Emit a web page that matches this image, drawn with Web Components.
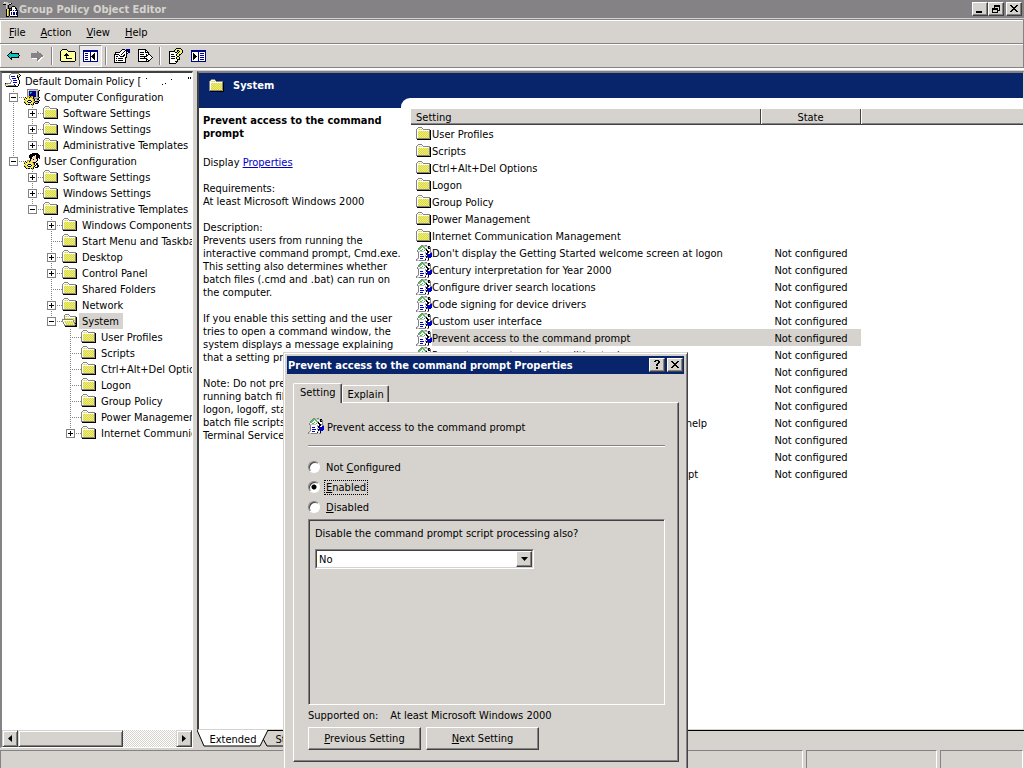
<!doctype html>
<html lang="en">
<head>
  <meta charset="utf-8">
  <title>Group Policy Object Editor</title>
  <style>
    html, body { height: 100%; margin: 0; }
    body {
      --face: #d6d3ce; --shade: #848284; --dark: #424142; --navy: #08246b;
      background: var(--face); color: #000; overflow: hidden;
      font: 11px/13px "DejaVu Sans Condensed", "DejaVu Sans", Tahoma, sans-serif;
    }
  </style>
</head>
<body>
  <policy-editor>
    <tree-item slot="tree" icon="scroll" root>Default Domain Policy [ <pixel-icon name="specks"></pixel-icon>
      <tree-item slot="kids" state="minus" icon="computer">Computer Configuration
        <tree-item slot="kids" state="plus">Software Settings</tree-item>
        <tree-item slot="kids" state="plus">Windows Settings</tree-item>
        <tree-item slot="kids" state="plus" last>Administrative Templates</tree-item>
      </tree-item>
      <tree-item slot="kids" state="minus" icon="user" last>User Configuration
        <tree-item slot="kids" state="plus">Software Settings</tree-item>
        <tree-item slot="kids" state="plus">Windows Settings</tree-item>
        <tree-item slot="kids" state="minus" last>Administrative Templates
          <tree-item slot="kids" state="plus">Windows Components</tree-item>
          <tree-item slot="kids">Start Menu and Taskbar</tree-item>
          <tree-item slot="kids" state="plus">Desktop</tree-item>
          <tree-item slot="kids" state="plus">Control Panel</tree-item>
          <tree-item slot="kids">Shared Folders</tree-item>
          <tree-item slot="kids" state="plus">Network</tree-item>
          <tree-item slot="kids" state="minus" icon="open" selected last>System
            <tree-item slot="kids">User Profiles</tree-item>
            <tree-item slot="kids">Scripts</tree-item>
            <tree-item slot="kids">Ctrl+Alt+Del Options</tree-item>
            <tree-item slot="kids">Logon</tree-item>
            <tree-item slot="kids">Group Policy</tree-item>
            <tree-item slot="kids">Power Management</tree-item>
            <tree-item slot="kids" state="plus" last>Internet Communication Management</tree-item>
          </tree-item>
        </tree-item>
      </tree-item>
    </tree-item>

    <policy-help slot="help"></policy-help>
    <policy-list slot="list"></policy-list>
    <policy-dialog slot="dialog"></policy-dialog>
  </policy-editor>

  <template id="policy-editor-template">
    <style>
      :host { display: flex; flex-direction: column; height: 100vh; position: relative; overflow: hidden; }
      button { font: inherit; color: inherit; padding: 0; border: 0; background: none; }
      .title { display: flex; align-items: center; height: 18px; padding: 0 2px 0 2px; background: var(--shade); color: var(--face); font-weight: bold; }
      .title span { flex: 1; }
      .title pixel-icon { margin-right: 1px; }
      .bar { display: flex; align-items: center; box-sizing: border-box; height: 24px; border-top: 1px solid var(--shade); border-right: 1px solid var(--shade); box-shadow: inset 1px 1px #fff; }
      .menu { margin-top: 1px; padding: 2px 0 0 2px; }
      .menu button { padding: 0 8px 0 7px; }
      .tools { padding-left: 2px; }
      .tools button { display: grid; place-items: center; width: 23px; height: 22px; }
      .tools button.on { box-sizing: border-box; border: 1px solid; border-color: var(--shade) #fff #fff var(--shade); background: #ebe9e7; }
      .tools i { width: 1px; height: 18px; margin: 0 3px 0 3px; background: var(--shade); border-right: 1px solid #fff; }
      .edge { height: 2px; border-top: 1px solid var(--shade); background: #fff; }
      .main { flex: 1; min-height: 0; display: flex; gap: 4px; margin-top: 1px; }
      .tree { width: 193px; box-sizing: border-box; display: flex; flex-direction: column; border: solid; border-width: 2px 1px 1px 2px; border-color: var(--dark) #fff #fff var(--shade); background: #fff; }
      .scroll { flex: 1; min-height: 0; overflow: hidden; padding-left: 3px; }
      .hbar { display: flex; height: 17px; background: repeating-conic-gradient(#fff 0 25%, var(--face) 0 50%) 0 0 / 2px 2px; }
      .hbar .thumb { width: 105px; }
      .raised { box-sizing: border-box; background: var(--face); border: 1px solid; border-color: var(--face) var(--dark) var(--dark) var(--face); box-shadow: inset 1px 1px #fff, inset -1px -1px var(--shade); }
      .hbar button { display: grid; place-items: center; width: 16px; }
      .hbar button:last-child { margin-left: auto; }
      .right { flex: 1; min-width: 0; display: flex; flex-direction: column; }
      .view { flex: 1; min-height: 0; display: flex; flex-direction: column; border: solid; border-width: 2px 1px 1px 2px; border-color: var(--shade) var(--face) var(--face) var(--dark); background: #fff; }
      .head { display: flex; align-items: center; gap: 8px; height: 25px; padding-left: 10px; background: var(--navy); color: #fff; font-weight: bold; }
      .cols { flex: 1; min-height: 0; display: flex; background: linear-gradient(var(--navy) 10px, #fff 10px); }
      .cols .help { width: 202px; padding-top: 10px; }
      .cols .list { flex: 1; min-width: 0; padding: 11px 0 0 10px; border-top-left-radius: 9px; background: #fff; }
      .tabs { display: flex; height: 17px; border-top: 1px solid #000; }
      .tabs button { position: relative; width: 72px; }
      .tabs button + button { margin-left: -7px; }
      .tabs svg { position: absolute; inset: -1px 0 0 0; width: 100%; height: 17px; }
      .tabs span { position: relative; }
      .tabs button:first-child { z-index: 1; }
      .status { display: flex; gap: 3px; height: 18px; margin-top: 2px; box-sizing: border-box; padding-right: 1px; }
      .status div { border: 1px solid; border-color: var(--shade) #fff #fff var(--shade); border-bottom: 0; }
      .status div:nth-child(1) { flex: 1; }
      .status div:nth-child(2) { width: 129px; }
      .status div:nth-child(3) { width: 81px; }
    </style>

    <div class="title">
      <pixel-icon name="app"></pixel-icon><span>Group Policy Object Editor</span>
      <caption-buttons kinds="min restore close"></caption-buttons>
    </div>
    <div class="bar menu">
      <button><u>F</u>ile</button><button><u>A</u>ction</button><button><u>V</u>iew</button><button><u>H</u>elp</button>
    </div>
    <div class="bar tools">
      <button aria-label="Back"><pixel-icon name="back"></pixel-icon></button>
      <button aria-label="Forward"><pixel-icon name="forward"></pixel-icon></button>
      <i></i>
      <button aria-label="Up one level"><pixel-icon name="up"></pixel-icon></button>
      <button aria-label="Show tree" class="on"><pixel-icon name="panelLeft"></pixel-icon></button>
      <i></i>
      <button aria-label="Properties"><pixel-icon name="props"></pixel-icon></button>
      <button aria-label="Export list"><pixel-icon name="export"></pixel-icon></button>
      <i></i>
      <button aria-label="Help"><pixel-icon name="help"></pixel-icon></button>
      <button aria-label="Show pane"><pixel-icon name="panelRight"></pixel-icon></button>
    </div>
    <div class="edge"></div>

    <div class="main">
      <div class="tree">
        <div class="scroll"><slot name="tree"></slot></div>
        <div class="hbar">
          <button class="raised" aria-label="Scroll left"><svg width="4" height="7"><path d="M4 0v7L0 3.500z"/></svg></button>
          <div class="raised thumb"></div>
          <button class="raised" aria-label="Scroll right"><svg width="4" height="7"><path d="M0 0v7l4-3.500z"/></svg></button>
        </div>
      </div>
      <div class="right">
        <div class="view">
          <div class="head"><pixel-icon name="folder"></pixel-icon>System</div>
          <div class="cols">
            <div class="help"><slot name="help"></slot></div>
            <div class="list"><slot name="list"></slot></div>
          </div>
        </div>
        <div class="tabs">
          <button><svg viewBox="0 0 72 17" preserveAspectRatio="none"><path d="M0 0l7 16h56l8-16" fill="#fff" stroke="#000"/></svg><span>Extended</span></button>
          <button><svg viewBox="0 0 72 17" preserveAspectRatio="none"><path d="M0 7l5 9h58l8-16" fill="none" stroke="#000"/></svg><span>Standard</span></button>
        </div>
      </div>
    </div>
    <div class="status"><div></div><div></div><div></div></div>
    <slot name="dialog"></slot>
  </template>

  <template id="tree-item-template">
    <style>
      :host { display: block; white-space: nowrap; --dots: #848284; }
      .row { display: flex; align-items: center; height: 16px; }
      .stub { position: relative; flex: none; width: 19px; height: 16px;
        background:
          repeating-linear-gradient(90deg, var(--dots) 0 1px, transparent 1px 2px) 8px 8px / 11px 1px no-repeat,
          repeating-linear-gradient(var(--dots) 0 1px, transparent 1px 2px) 8px 0 / 1px 16px no-repeat; }
      :host([last]) .stub {
        background:
          repeating-linear-gradient(90deg, var(--dots) 0 1px, transparent 1px 2px) 8px 8px / 11px 1px no-repeat,
          repeating-linear-gradient(var(--dots) 0 1px, transparent 1px 2px) 8px 0 / 1px 8px no-repeat; }
      :host([root]) > .row .stub { display: none; }
      button { display: none; position: absolute; left: 4px; top: 4px; width: 9px; height: 9px; padding: 0; border: 1px solid var(--shade); background: linear-gradient(#000, #000) 1px 3px / 5px 1px no-repeat #fff; }
      :host([state]) button { display: block; }
      :host([state="plus"]) button { background: linear-gradient(#000, #000) 1px 3px / 5px 1px no-repeat, linear-gradient(#000, #000) 3px 1px / 1px 5px no-repeat #fff; }
      .label { box-sizing: border-box; height: 16px; line-height: 14px; padding: 2px 4px 0 3px; margin-left: 1px; }
      :host([selected]) .label { background: var(--face); }
      .kids { padding-left: 19px; }
      :host([root]) .kids { padding-left: 0; }
      :host(:not([last]):not([root])) .kids { background: repeating-linear-gradient(var(--dots) 0 1px, transparent 1px 2px) 8px 0 / 1px 100% no-repeat; }
    </style>
    <div class="row">
      <span class="stub"><button aria-label="Expand or collapse"></button></span>
      <pixel-icon></pixel-icon>
      <span class="label"><slot></slot></span>
    </div>
    <div class="kids"><slot name="kids"></slot></div>
  </template>

  <template id="policy-help-template">
    <style>
      :host { display: block; padding: 6px 0 0 4px; white-space: nowrap; }
      h2 { font-size: 11px; line-height: 13px; margin: 0 0 16px; }
      p { margin: 0 0 13px; }
      a { color: #0000c6; }
    </style>
    <h2>Prevent access to the command<br>prompt</h2>
    <p>Display <a href="#properties">Properties</a></p>
    <p>Requirements:<br>At least Microsoft Windows 2000</p>
    <p>Description:<br>Prevents users from running the<br>interactive command prompt, Cmd.exe.<br>This setting also determines whether<br>batch files (.cmd and .bat) can run on<br>the computer.</p>
    <p>If you enable this setting and the user<br>tries to open a command window, the<br>system displays a message explaining<br>that a setting prevents the action.</p>
    <p>Note: Do not prevent the computer from<br>running batch files if the computer uses<br>logon, logoff, startup, or shutdown<br>batch file scripts, or for users that use<br>Terminal Services.</p>
  </template>

  <template id="policy-list-template">
    <style>
      :host { display: block; }
      table { width: 100%; table-layout: fixed; border-collapse: separate; border-spacing: 0; }
      th { box-sizing: border-box; height: 16px; padding: 2px 5px 0; font-weight: normal; line-height: 13px; background: var(--face); border-bottom: 1px solid var(--dark); border-right: 1px solid var(--dark); box-shadow: inset 1px 0 #fff, inset 0 -1px var(--shade); }
      th:first-child { text-align: left; box-shadow: inset 0 -1px var(--shade); }
      th:last-child { border-right: 0; }
      td { height: 17px; padding: 0; line-height: 15px; white-space: nowrap; }
      td:nth-child(2) { box-sizing: border-box; padding-top: 2px; text-align: center; }
      .name { display: flex; align-items: center; padding-left: 5px; }
      .name span { flex: 1; padding-top: 2px; }
      .selected span, .selected td:nth-child(2) { background: var(--face); }
    </style>
    <table>
      <colgroup><col style="width: 350px"><col style="width: 100px"><col></colgroup>
      <thead><tr><th>Setting</th><th>State</th><th></th></tr></thead>
      <tbody></tbody>
    </table>
  </template>

  <template id="policy-dialog-template">
    <style>
      :host { position: absolute; left: 283px; top: 352px; bottom: 0; width: 405px; box-sizing: border-box; display: flex; flex-direction: column; padding: 2px 2px 0; background: var(--face); border: 1px solid; border-color: var(--face) var(--dark) var(--dark) var(--face); border-bottom: 0; box-shadow: inset 1px 1px #fff, inset -1px 0 var(--shade); }
      button, select { font: inherit; color: inherit; }
      .title { display: flex; align-items: center; height: 18px; margin: 1px; padding: 0 1px; background: var(--navy); color: #fff; font-weight: bold; }
      .title span { flex: 1; }
      .tabs { display: flex; align-items: flex-end; height: 19px; padding: 8px 0 0 7px; }
      .tabs button { height: 17px; padding: 0 4px; border: 1px solid; border-color: #fff var(--dark) transparent #fff; border-bottom: 0; border-radius: 2px 2px 0 0; background: var(--face); box-shadow: inset -1px 0 var(--shade); }
      .tabs button:first-child { height: 20px; padding: 0 6px 3px; margin-bottom: -1px; position: relative; }
      .page { flex: 1; min-height: 0; display: flex; flex-direction: column; margin: 0 6px 6px 7px; padding: 15px 13px 11px 14px; border: 1px solid; border-color: #fff var(--dark) var(--dark) #fff; box-shadow: inset -1px -1px var(--shade); }
      .name { display: flex; align-items: center; gap: 3px; }
      .name span { padding-top: 2px; }
      hr { width: 100%; box-sizing: border-box; height: 2px; margin: 11px 0 12px; border: 0; border-top: 1px solid var(--shade); border-bottom: 1px solid #fff; }
      .radio { display: flex; align-items: center; height: 16px; gap: 4px; margin-bottom: 4px; }
      .radio span { padding: 0 1px; border: 1px solid transparent; }
      input:checked + span { border: 1px dotted #000; }
      input { appearance: none; width: 12px; height: 12px; margin: 0; border-radius: 50%; border: 1px solid; border-color: var(--shade) #fff #fff var(--shade); background: #fff; box-shadow: inset 1px 1px var(--dark); }
      input:checked { background: radial-gradient(circle, #000 2px, #fff 3px); }
      .options { flex: 1; border: 1px solid; border-color: var(--shade) #fff #fff var(--shade); box-shadow: inset 1px 1px var(--dark); padding: 7px 6px; }
      .options label { display: block; margin-bottom: 9px; }
      .combo { display: grid; width: 219px; height: 20px; box-sizing: border-box; border: 1px solid; border-color: var(--shade) #fff #fff var(--shade); }
      .combo select, .combo span { grid-area: 1 / 1; }
      select { appearance: none; border: 1px solid; border-color: var(--dark) var(--face) var(--face) var(--dark); border-radius: 0; background: #fff; padding: 0 2px; }
      .combo span { display: grid; place-items: center; justify-self: end; width: 16px; margin: 1px; box-sizing: border-box; background: var(--face); border: 1px solid; border-color: #fff var(--dark) var(--dark) #fff; box-shadow: inset -1px -1px var(--shade); pointer-events: none; }
      .on { display: flex; gap: 12px; margin: 4px 0 5px; }
      .actions { display: flex; gap: 5px; }
      .actions button { width: 113px; height: 23px; padding: 0; background: var(--face); border: 1px solid; border-color: #fff var(--dark) var(--dark) #fff; box-shadow: inset -1px -1px var(--shade); }
    </style>
    <div class="title"><span>Prevent access to the command prompt Properties</span><caption-buttons kinds="what close"></caption-buttons></div>
    <div class="tabs"><button>Setting</button><button>Explain</button></div>
    <div class="page">
      <div class="name"><pixel-icon name="policy"></pixel-icon><span>Prevent access to the command prompt</span></div>
      <hr>
      <label class="radio"><input type="radio" name="state"><span>Not <u>C</u>onfigured</span></label>
      <label class="radio"><input type="radio" name="state" checked><span><u>E</u>nabled</span></label>
      <label class="radio"><input type="radio" name="state"><span><u>D</u>isabled</span></label>
      <div class="options">
        <label for="script">Disable the command prompt script processing also?</label>
        <div class="combo">
          <select id="script"><option>No</option><option>Yes</option></select>
          <span><svg width="7" height="4"><path d="M0 0h7L3.500 4z"/></svg></span>
        </div>
      </div>
      <div class="on"><span>Supported on:</span><span>At least Microsoft Windows 2000</span></div>
      <div class="actions"><button><u>P</u>revious Setting</button><button><u>N</u>ext Setting</button></div>
    </div>
  </template>

  <script>
    const COLORS = {
      k: '#000', w: '#fff', g: '#848284', l: '#c6c3c6', y: '#f0f070', Y: '#d8d84c', o: '#c6a600',
      b: '#0000c6', n: '#000084', c: '#00c6c6', G: '#4cc650', s: '#9c9ac6', p: '#ffff9c', d: '#424142', f: '#f7d7b5',
    };

    // one character per pixel, a dot is transparent
    const ICONS = {
      folder: `
................
..gggg..........
.gwwwwg.........
gwyYyYwggggggg..
gwwwwwwwwwwwwgk.
gwyYyYyYyYyYygk.
gwYyYyYyYyYyYgk.
gwyYyYyYyYyYygk.
gwYyYyYyYyYyYgk.
gwyYyYyYyYyYygk.
gwYyYyYyYyYyYgk.
gwyYyYyYyYyYygk.
gggggggggggggok.
.kkkkkkkkkkkkkk.
................
................`,
      open: `
................
...gggg.........
..gwwwwg........
..gyYyYwgggggg..
..gwwwwwwwwwwgk.
..gYyYyYyYyYygk.
gggggggggggYygk.
gwwwwwwwwwwgYgk.
gwyYyYyYyYygygk.
.gwYyYyYyYyYggk.
.gwyYyYyYyYygkk.
..gwYyYyYyYyYgk.
..gggggggggggkk.
...kkkkkkkkkkkk.
................
................`,
      policy: `
.....ggllgg.....
....gGGGllllkk..
...gGGwGGwwlkgg.
..gGGwwwGGlwkkg.
..gGwwGwwgkwwwg.
.gwwGGwwgwkkwwg.
.gllllllwwwkkgg.
..gwwwwwwswkkwsg
..gwwwwwwskbwwbb
..gwbbbwwwkbbbbb
..gwwwwwwswbbbbb
..gwbbbbwskbbbbb
..gwwwwwwwkgbbb.
.slwbbbwws.wk...
glwwwwwwwk.wk...
gllggggggs.gg...`,
      scroll: `
......gggggggg..
.....gwwwwwwwyk.
....gwwwwwwwkyyk
....gwbbbbwwkyk.
....gwwwwwwwkk..
....gwwbbbbwwk..
.....gwwwwwwwk..
......gwbbbbwwk.
......gwwwwwwwk.
.....gwwbbbbwwk.
kgggggwwwwwwwwk.
gylwwwwwwkwwwk..
gyygggggggkwwk..
.kkkkkkkkkkkk...
................
................`,
      computer: `
...ggggggggggg..
...gwlllllllllgk
...glnnnnnnnlgk.
...glnccnnnnlgk.
...glncnnnnnlgk.
...glnnnnnnnlgk.
...glnnnnnnnlgk.
...ooonoonnnlgk.
.k.oykooykolllgk
oykyyoyyokggggk.
kyyyyyyyyokllkk.
.oyykkkyyokwlllk
oyyk.w.kyyokkkk.
koyykkkyyokllgk.
.kyyyyyyyk.kkk..
..kokkykok......`,
      user: `
........kkkkkk..
......kkkkkkkkk.
.....kkkkkkwkkkk
.....kkkkwffkkkk
.....kkkwfffkkkk
......kkffffkk.k
......kffkfffk..
...oookffffffk..
.k.oykofffffk...
oykyyoyyokkk....
kyyyyyyyyokwkk..
.oyykkkyyokwkk..
oyyk.w.kyyokwkk.
koyykkkyyokwwkk.
.kyyyyyyyk.kkk..
..kokkykok......`,
      app: `
..ggggg.........
.gwlllggg.......
glllllllwk......
gkkklllkk.......
....lgk.........
....lgk...kkk...
....lgk..kwwwk..
....lgkkkkwpwkk.
....kyyk.kwwwwk.
....kyokkkwbwbkk
....kyokwwwwwwwk
....kyokwnwnnwnk
....kyokwnwnnwnk
....kyokwnwnnwnk
....kyokwwwwwwwk
....kkk.kkkkkkkk`,
      back: `
................
................
................
.....k..........
....kk..........
...kckkkkkkkk...
..kccccccccck...
.kccccccccccck..
..kccccccccck...
...kckkkkkkkk...
....kk..........
.....k..........
................
................
................
................`,
      forward: `
................
................
................
........g.......
........gg......
..gggggggggg....
..ggggggggggg...
..gggggggggggg..
..ggggggggggggw.
..ggggggggggww..
...wwwwwgggww...
........ggww....
........gww.....
.........w......
................
................`,
      up: `
................
..kkkkk.........
.kpppppk........
kpppppppkkkkkkk.
kppppppppppppppk
kpppppkppppppppk
kppppkkkpppppppk
kpppkkkkkppppppk
kpppppkppppppppk
kpppppkppppppppk
kpppppkkkkkkpppk
kppppppppppppppk
kppppppppppppppk
.kkkkkkkkkkkkkk.
................
................`,
      panelLeft: `
................
................
nnnnnnnnnnnnnnn.
nnnnnnnnnnnnnnn.
nwwwwwwnwwwwwwn.
nwnnnwwnwwwkwwn.
nwwwwwwnwwkkwwn.
nwnnnwwnwkkkwwn.
nwwwwwwnkkkkwwn.
nwnnnwwnwkkkwwn.
nwwwwwwnwwkkwwn.
nwnnnwwnwwwkwwn.
nwwwwwwnwwwwwwn.
nnnnnnnnnnnnnnn.
................
................`,
      panelRight: `
................
................
nnnnnnnnnnnnnnn.
nnnnnnnnnnnnnnn.
nwwwwwwnwwwwwwn.
nwkwwwwnwnnnnwn.
nwkkwwwnwwwwwwn.
nwkkkwwnwnnnnwn.
nwkkkkwnwwwwwwn.
nwkkkwwnwnnnnwn.
nwkkwwwnwwwwwwn.
nwkwwwwnwnnnnwn.
nwwwwwwnwwwwwwn.
nnnnnnnnnnnnnnn.
................
................`,
      props: `
................
........kkk.nnnn
.......kwwwknnnn
......kwwwkwknnn
.kkkkkwwwkwwkwnn
.kwwwwwwkwwwkk..
kkkkkwwkwwkwk...
kwwwwkwwwkkwk...
kwkkwwkkkkwwk...
kwwwwwwwwwwkk...
kwkwkkkkkwwk....
kwwwwwwwwwwk....
kwkwkkkkkwwk....
kwwwwwwwwwwk....
kkkkkkkkkkkk....
................`,
      export: `
................
.kkkkkkkk.......
.kwwwwwwkk......
.kwwwwwwkwk.....
.kwkkkkwkkkk....
.kwwwwwwwwwk....
.kwkkkkwwkwkk...
.kwwwwwwwkkwwk..
.kwkkkkkkkwwwwk.
.kwwwwwkwwwwwwwk
.kwkkkkkkkwwwwk.
.kwwwwwwwkkwwk..
.kwwwwwwwkwkk...
.kkkkkkkkkkk....
................
................`,
      help: `
........kkkkk...
.......kyyyyyk..
......kyykkyyyk.
.kkkkkkyyk.kyyk.
.kwwwwwkk.kyyyk.
.kwwwwwwwkyyyk..
.kwkkkwwkyykk...
.kwwwwwwkyyk....
.kwkkkkwwkk.....
.kwwwwwwkyyk....
.kwkkkkwkyyk....
.kwwwwwwwkkk....
.kwwwwwwwk......
.kwwwwwkkk......
.kwwwwwwk.......
.kkkkkkk........`,
      specks: `
................................................
................................................
............................................k.k.
..k.........................................k.k.
...........................k....................
................................................
................................................
................................................
.....................k..........................
..................k.............................`,
      min: `
........
........
........
........
........
........
kkkkkk..
kkkkkk..`,
      restore: `
..kkkkkk
..kkkkkk
..k....k
kkkkkk.k
kkkkkk.k
k....kkk
k....k..
kkkkkk..`,
      close: `
kk....kk
.kk..kk.
..kkkk..
...kk...
..kkkk..
.kk..kk.
kk....kk`,
      what: `
.kkkk.
kk..kk
....kk
...kk.
..kk..
..kk..
......
..kk..
..kk..`,
    };

    // base for elements that only clone their own template
    class Templated extends HTMLElement {
      constructor() {
        super();
        const templ = document.querySelector('#' + this.localName + '-template');
        this.attachShadow({mode: 'open'}).appendChild(templ.content.cloneNode(true));
      }
    }

    class PixelIcon extends HTMLElement {
      static get observedAttributes() { return ['name']; }
      constructor() {
        super();
        this.attachShadow({mode: 'open'});
      }
      connectedCallback() {
        this.draw();
      }
      attributeChangedCallback() {
        this.draw();
      }
      draw() {
        const rows = ICONS[this.getAttribute('name') || 'folder'].trim().split('\n');
        const width = Math.max(...rows.map(r => r.length));
        let rects = '';
        rows.forEach((row, y) => {
          for (const run of row.matchAll(/([^.])\1*/g)) {
            rects += `<rect x="${run.index}" y="${y}" width="${run[0].length}" height="1" fill="${COLORS[run[1]]}"/>`;
          }
        });
        this.shadowRoot.innerHTML = `
          <style>:host { display: inline-block; flex: none; } svg { display: block; }</style>
          <svg width="${width}" height="${rows.length}" shape-rendering="crispEdges" aria-hidden="true">${rects}</svg>`;
      }
    }

    class CaptionButtons extends HTMLElement {
      constructor() {
        super();
        this.attachShadow({mode: 'open'});
      }
      connectedCallback() {
        const kinds = this.getAttribute('kinds').split(' ');
        this.shadowRoot.innerHTML = `
          <style>
            :host { display: flex; }
            button { display: grid; place-items: center; width: 16px; height: 14px; padding: 0 1px 1px 0; box-sizing: border-box; background: var(--face); border: 1px solid; border-color: #fff var(--dark) var(--dark) #fff; box-shadow: inset -1px -1px var(--shade); }
            button:last-child { margin-left: 2px; }
          </style>
          ${kinds.map(k => `<button aria-label="${k}"><pixel-icon name="${k}"></pixel-icon></button>`).join('')}`;
      }
    }

    class TreeItem extends Templated {
      connectedCallback() {
        this.shadowRoot.querySelector('pixel-icon').setAttribute('name', this.getAttribute('icon') || 'folder');
      }
    }

    class PolicyList extends Templated {
      connectedCallback() {
        const folders = ['User Profiles', 'Scripts', 'Ctrl+Alt+Del Options', 'Logon', 'Group Policy', 'Power Management', 'Internet Communication Management'];
        const settings = [
          "Don't display the Getting Started welcome screen at logon",
          'Century interpretation for Year 2000',
          'Configure driver search locations',
          'Code signing for device drivers',
          'Custom user interface',
          'Prevent access to the command prompt',
          'Prevent access to registry editing tools',
          'Run only allowed Windows applications',
          "Don't run specified Windows applications",
          'Turn off Autoplay',
          'Restrict these programs from being launched from help',
          'Download missing COM components',
          'Windows Automatic Updates',
          'Turn off Windows Update device driver search prompt',
        ];
        const row = (icon, name, state) => `
          <tr class="${name === 'Prevent access to the command prompt' ? 'selected' : ''}">
            <td><div class="name"><pixel-icon name="${icon}"></pixel-icon><span>${name}</span></div></td>
            <td>${state}</td><td></td>
          </tr>`;
        this.shadowRoot.querySelector('tbody').innerHTML =
          folders.map(name => row('folder', name, '')).join('') +
          settings.map(name => row('policy', name, 'Not configured')).join('');
      }
    }

    class PolicyEditor extends Templated {}
    class PolicyHelp extends Templated {}
    class PolicyDialog extends Templated {}

    window.customElements.define('pixel-icon', PixelIcon);
    window.customElements.define('caption-buttons', CaptionButtons);
    window.customElements.define('tree-item', TreeItem);
    window.customElements.define('policy-help', PolicyHelp);
    window.customElements.define('policy-list', PolicyList);
    window.customElements.define('policy-dialog', PolicyDialog);
    window.customElements.define('policy-editor', PolicyEditor);
  </script>
</body>
</html>
